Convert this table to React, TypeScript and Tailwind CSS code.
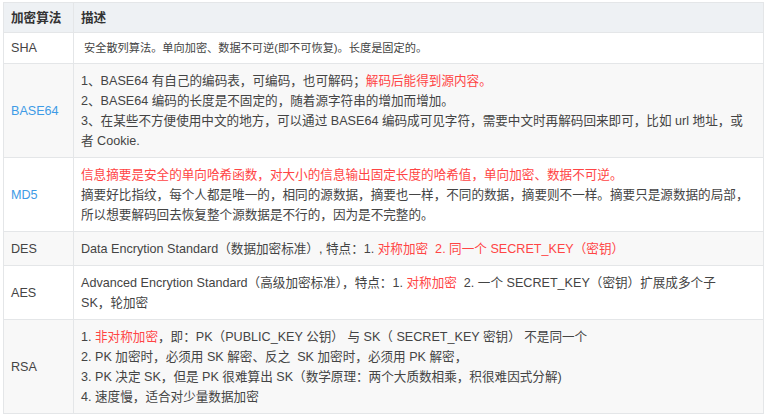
import React from "react";

const R = ({ children }: { children: React.ReactNode }) => (
  <span className="text-[#ff4545]">{children}</span>
);

type Row = {
  name: string;
  blue?: boolean;
  gray?: boolean;
  lines: React.ReactNode[];
};

const rows: Row[] = [
  {
    name: "BASE64",
    blue: true,
    gray: true,
    lines: [
      <>
        1、BASE64 有自己的编码表，可编码，也可解码；<R>解码后能得到源内容。</R>
      </>,
      <>2、BASE64 编码的长度是不固定的，随着源字符串的增加而增加。</>,
      <>3、在某些不方便使用中文的地方，可以通过 BASE64 编码成可见字符，需要中文时再解码回来即可，比如 url 地址，或</>,
      <>者 Cookie.</>,
    ],
  },
  {
    name: "MD5",
    blue: true,
    lines: [
      <R>信息摘要是安全的单向哈希函数，对大小的信息输出固定长度的哈希值，单向加密、数据不可逆。</R>,
      <>摘要好比指纹，每个人都是唯一的，相同的源数据，摘要也一样，不同的数据，摘要则不一样。摘要只是源数据的局部，</>,
      <>所以想要解码回去恢复整个源数据是不行的，因为是不完整的。</>,
    ],
  },
  {
    name: "DES",
    gray: true,
    lines: [
      <>
        Data Encrytion Standard（数据加密标准）, 特点：1. <R>对称加密&nbsp; 2. 同一个 SECRET_KEY（密钥）</R>
      </>,
    ],
  },
  {
    name: "AES",
    lines: [
      <>
        Advanced Encrytion Standard（高级加密标准），特点：1. <R>对称加密</R>&nbsp; 2. 一个 SECRET_KEY（密钥）扩展成多个子
      </>,
      <>SK，轮加密</>,
    ],
  },
  {
    name: "RSA",
    gray: true,
    lines: [
      <>
        1. <R>非对称加密</R>，即：PK（PUBLIC_KEY 公钥） 与 SK（ SECRET_KEY 密钥） 不是同一个
      </>,
      <>2. PK 加密时，必须用 SK 解密、反之&nbsp; SK 加密时，必须用 PK 解密，</>,
      <>3. PK 决定 SK，但是 PK 很难算出 SK（数学原理：两个大质数相乘，积很难因式分解)</>,
      <>4. 速度慢，适合对少量数据加密</>,
    ],
  },
];

export default function App() {
  return (
    <div className="bg-white w-[768px] h-[417px] pt-[2px] pl-[3px] font-['Liberation_Sans','Noto_Sans_CJK_SC',sans-serif] text-[12.6px] leading-[20px] text-[#444]">
      <div className="w-[761px] border border-[#e4e6e8] flex flex-col">
        <div className="grid grid-cols-[70px_1fr] h-[29px] bg-[#eef1f4] font-bold text-[#333]">
          <div className="px-[7px] flex items-center border-r border-[#e4e6e8]">加密算法</div>
          <div className="px-[7px] flex items-center">描述</div>
        </div>
        <div className="grid grid-cols-[70px_1fr] h-[31px] border-t border-[#e4e6e8] bg-white">
          <div className="px-[7px] flex items-center border-r border-[#e4e6e8]">SHA</div>
          <div className="pl-[10px] pr-[7px] flex items-center text-[11.2px] whitespace-pre">
            安全散列算法。单向加密、数据不可逆(即不可恢复)。长度是固定的。
          </div>
        </div>
        {rows.map((r) => (
          <div
            key={r.name}
            className={`grid grid-cols-[70px_1fr] border-t border-[#e4e6e8] ${
              r.gray ? "bg-[#f8f8f8]" : "bg-white"
            }`}
          >
            <div
              className={`px-[7px] flex items-center border-r border-[#e4e6e8] ${
                r.blue ? "text-[#3e9be6]" : ""
              }`}
            >
              {r.name}
            </div>
            <div className="px-[7px] pt-[7px] pb-[6px] flex flex-col">
              {r.lines.map((l, i) => (
                <div key={i} className="h-[20px] flex items-center whitespace-pre">
                  <span>{l}</span>
                </div>
              ))}
            </div>
          </div>
        ))}
      </div>
    </div>
  );
}
